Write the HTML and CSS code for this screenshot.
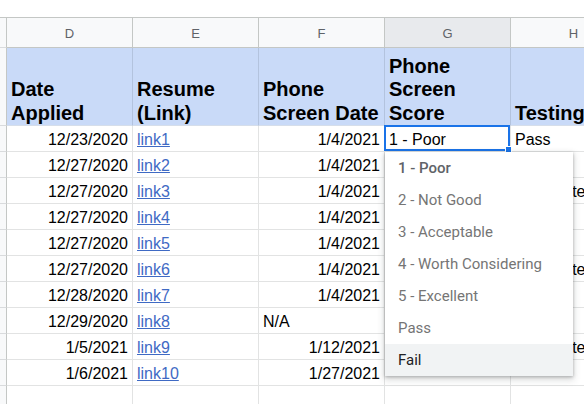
FILE: index.html
```html
<!DOCTYPE html>
<html>
<head>
<meta charset="utf-8">
<link rel="stylesheet" href="styles.css">
</head>
<body>
<div class="topbar"></div>
<div class="sheet">
  <div class="rh"></div>
  <div class="col">D</div>
  <div class="col">E</div>
  <div class="col">F</div>
  <div class="col col-sel">G</div>
  <div class="col">H</div>

  <div class="rh hdr-rh"></div>
  <div class="hdr">Date Applied</div>
  <div class="hdr">Resume (Link)</div>
  <div class="hdr">Phone Screen Date</div>
  <div class="hdr">Phone Screen Score</div>
  <div class="hdr">Testing</div>

  <div class="rh"></div>
  <div class="cell num">12/23/2020</div>
  <div class="cell"><a class="link">link1</a></div>
  <div class="cell num">1/4/2021</div>
  <div class="cell active">1 - Poor
    <div class="sel"><span class="handle"></span></div>
    <div class="menu">
      <div class="item item-cur">1 - Poor</div>
      <div class="item">2 - Not Good</div>
      <div class="item">3 - Acceptable</div>
      <div class="item">4 - Worth Considering</div>
      <div class="item">5 - Excellent</div>
      <div class="item">Pass</div>
      <div class="item item-hover">Fail</div>
    </div>
  </div>
  <div class="cell">Pass</div>

  <div class="rh"></div>
  <div class="cell num">12/27/2020</div>
  <div class="cell"><a class="link">link2</a></div>
  <div class="cell num">1/4/2021</div>
  <div class="cell"></div>
  <div class="cell"></div>

  <div class="rh"></div>
  <div class="cell num">12/27/2020</div>
  <div class="cell"><a class="link">link3</a></div>
  <div class="cell num">1/4/2021</div>
  <div class="cell"></div>
  <div class="cell h-text">Complete</div>

  <div class="rh"></div>
  <div class="cell num">12/27/2020</div>
  <div class="cell"><a class="link">link4</a></div>
  <div class="cell num">1/4/2021</div>
  <div class="cell"></div>
  <div class="cell"></div>

  <div class="rh"></div>
  <div class="cell num">12/27/2020</div>
  <div class="cell"><a class="link">link5</a></div>
  <div class="cell num">1/4/2021</div>
  <div class="cell"></div>
  <div class="cell"></div>

  <div class="rh"></div>
  <div class="cell num">12/27/2020</div>
  <div class="cell"><a class="link">link6</a></div>
  <div class="cell num">1/4/2021</div>
  <div class="cell"></div>
  <div class="cell h-text">Complete</div>

  <div class="rh"></div>
  <div class="cell num">12/28/2020</div>
  <div class="cell"><a class="link">link7</a></div>
  <div class="cell num">1/4/2021</div>
  <div class="cell"></div>
  <div class="cell"></div>

  <div class="rh"></div>
  <div class="cell num">12/29/2020</div>
  <div class="cell"><a class="link">link8</a></div>
  <div class="cell">N/A</div>
  <div class="cell"></div>
  <div class="cell"></div>

  <div class="rh"></div>
  <div class="cell num">1/5/2021</div>
  <div class="cell"><a class="link">link9</a></div>
  <div class="cell num">1/12/2021</div>
  <div class="cell"></div>
  <div class="cell h-text">Complete</div>

  <div class="rh"></div>
  <div class="cell num">1/6/2021</div>
  <div class="cell"><a class="link">link10</a></div>
  <div class="cell num">1/27/2021</div>
  <div class="cell"></div>
  <div class="cell"></div>

  <div class="rh"></div>
  <div class="cell"></div>
  <div class="cell"></div>
  <div class="cell"></div>
  <div class="cell"></div>
  <div class="cell"></div>
</div>
</body>
</html>
```

FILE: styles.css
```css
html, body {
  margin: 0;
  padding: 0;
  background: #ffffff;
  overflow: hidden;
  width: 584px;
  height: 404px;
  font-family: "Liberation Sans", Arial, sans-serif;
}

.topbar {
  height: 17px;
  background: #ffffff;
  border-bottom: 1px solid #c4c7c5;
}

.sheet {
  display: grid;
  grid-template-columns: 7px repeat(5, 126px);
  grid-template-rows: 30px 78px;
  grid-auto-rows: 26px;
  width: 637px;
}

.sheet > div {
  box-sizing: border-box;
  min-width: 0;
}

.rh {
  background: #f8f9fa;
  border-right: 1px solid #c4c7c5;
  border-bottom: 1px solid #d9dbdd;
}

.col {
  background: #f8f9fa;
  border-right: 1px solid #c4c7c5;
  border-bottom: 1px solid #c4c7c5;
  display: flex;
  align-items: center;
  justify-content: center;
  padding-top: 1px;
  font-size: 13px;
  color: #5f6368;
}

.col-sel {
  background: #e8eaed;
}

.hdr {
  background: #c9daf8;
  border-right: 1px solid #b3c3de;
  border-bottom: 1px solid #d6deea;
  display: flex;
  align-items: flex-end;
  padding: 0 4px 0 4px;
  font-size: 20px;
  font-weight: bold;
  line-height: 23.5px;
  color: #000000;
}

.hdr-rh {
  background: #f8f9fa;
}

.cell {
  border-right: 1px solid #e2e3e3;
  border-bottom: 1px solid #e2e3e3;
  display: flex;
  align-items: center;
  padding: 3px 4px 0 4px;
  font-size: 16px;
  color: #000000;
  white-space: nowrap;
}

.num {
  justify-content: flex-end;
}

.h-text {
  padding-left: 6px;
}

.link {
  color: #3f6ac4;
  text-decoration: underline;
}

.active {
  position: relative;
}

.sel {
  position: absolute;
  left: -1px;
  top: -1px;
  right: 0;
  bottom: 0;
  border: 2px solid #1a73e8;
}

.handle {
  position: absolute;
  right: -4px;
  bottom: -4px;
  width: 5px;
  height: 5px;
  background: #1a73e8;
  border: 1px solid #ffffff;
}

.menu {
  position: absolute;
  left: 0;
  top: calc(100% + 1px);
  width: 188px;
  background: #ffffff;
  box-shadow: 0 1px 3px rgba(60, 64, 67, 0.35), 0 3px 7px 1px rgba(60, 64, 67, 0.18);
  z-index: 5;
  font-family: Roboto, "Liberation Sans", sans-serif;
}

.item {
  height: 32px;
  line-height: 32px;
  padding-left: 13px;
  font-size: 15px;
  color: #757575;
}

.item-cur {
  font-weight: 500;
  color: #5f6368;
}

.item-hover {
  background: #f1f3f4;
  color: #202124;
}
```
